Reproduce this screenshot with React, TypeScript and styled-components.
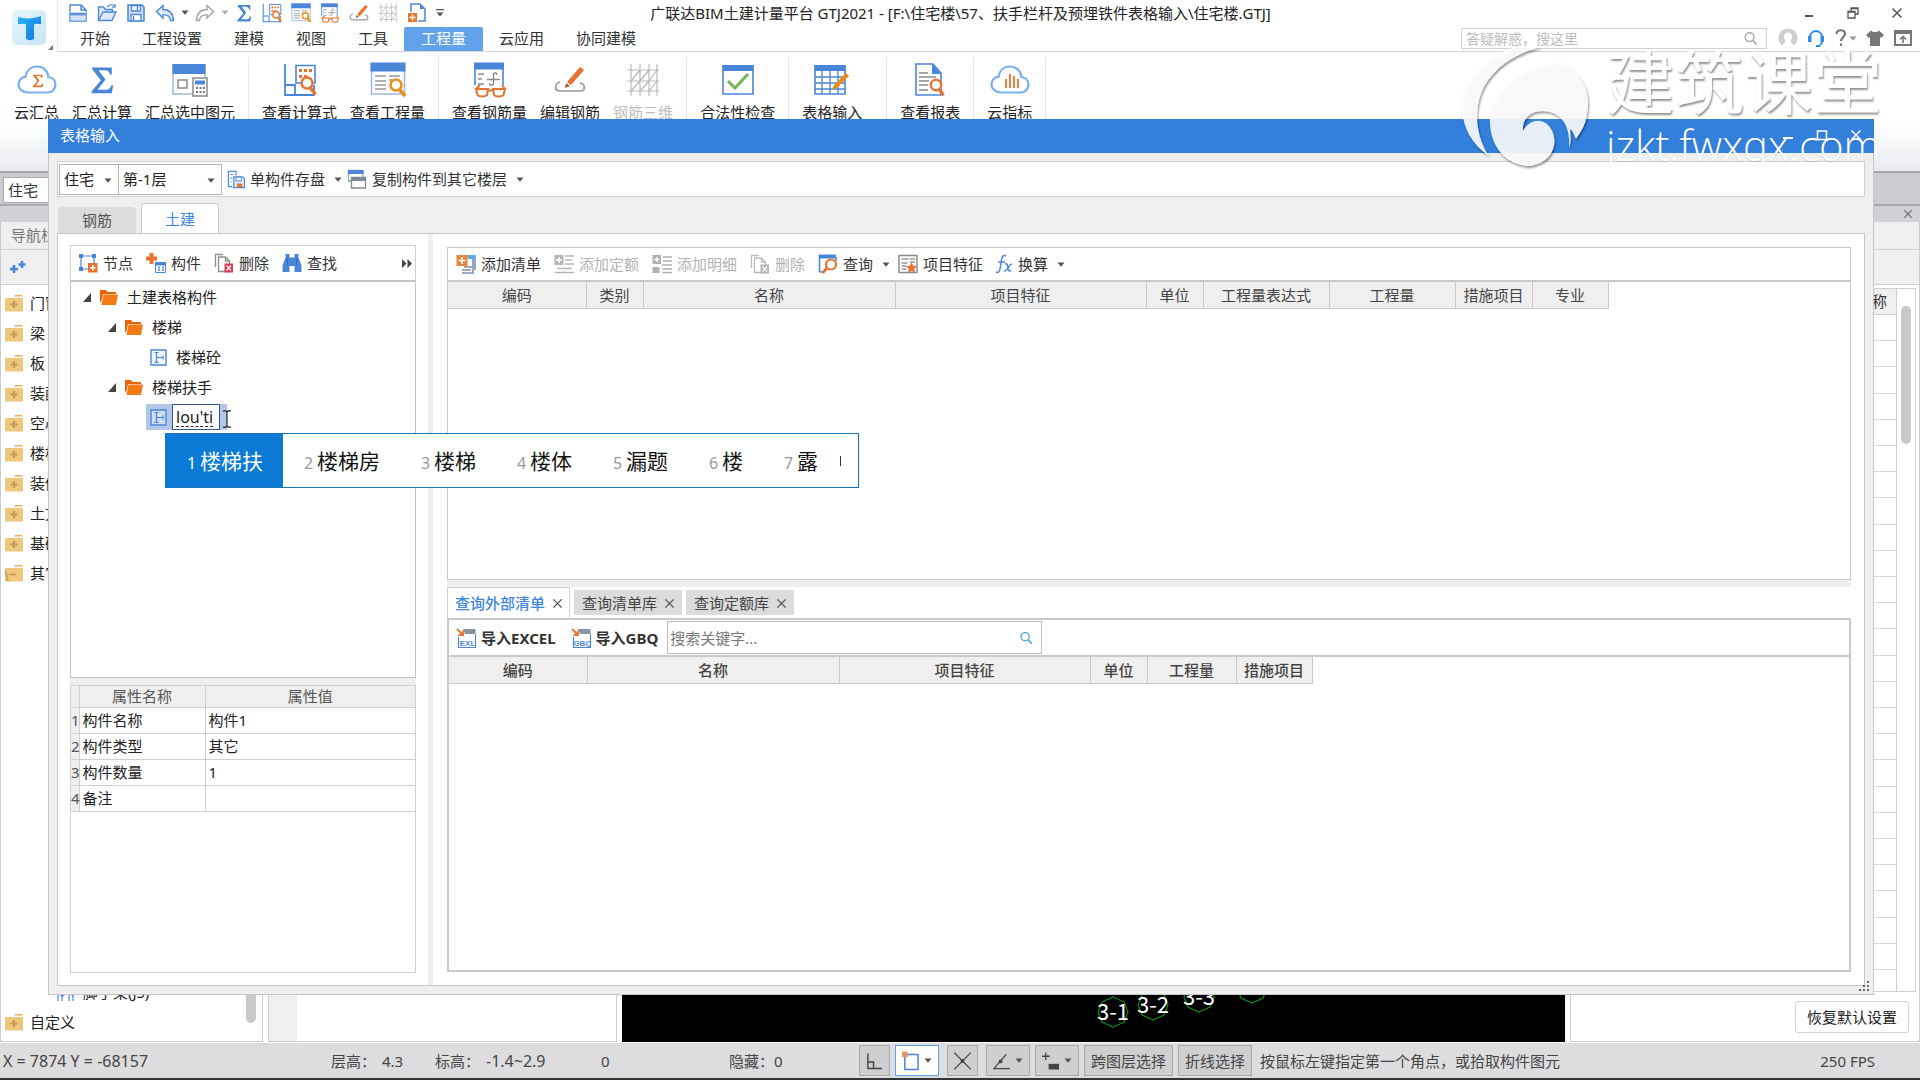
import React from "react";
import styled, { createGlobalStyle, css } from "styled-components";

const UI_FONT = `"Noto Sans", "Noto Sans CJK SC", sans-serif`;
const BLUE = "#4a86d8";
const ORANGE = "#e67430";
const GREY = "#a2a2a2";

const GlobalStyle = createGlobalStyle`
  *, *::before, *::after { box-sizing: border-box; }
  html, body { margin: 0; padding: 0; height: 100%; overflow: hidden; background: #fff; }
  body { font: 15px/20px ${UI_FONT}; color: #333; }
  button, input, select { font: inherit; color: inherit; margin: 0; }
  button { background: none; border: 0; padding: 0; }
  table { border-collapse: collapse; table-layout: fixed; }
  svg { display: block; flex: none; }
`;

/* ---------- icons ---------- */

type IconProps = { size?: number; w?: number; h?: number; box?: string; children?: React.ReactNode };
const Icon = ({ size = 20, w, h, box = "0 0 20 20", children }: IconProps) => (
  <svg width={w ?? size} height={h ?? size} viewBox={box} fill="none" aria-hidden="true">
    {children}
  </svg>
);

const Caret = ({ color = "#555" }: { color?: string }) => (
  <svg width="8" height="5" viewBox="0 0 8 5" aria-hidden="true">
    <path d="M0.5 0.5h7L4 4.8z" fill={color} />
  </svg>
);

const SIGMA = "M3 1h14v5h-1.4C15.2 4 14.300 3 12 3H7.500l5 6.600L6.800 17H13c2 0 3-1.200 3.600-3.200H18L17 19.500H2.500v-1.300l6.700-8L3 2.300z";
const CLOUD = "M11 27.500C5.500 27.500 1.500 24 1.500 19.500c0-4 3-7.300 7-7.800C9.500 5.500 14 1.500 20 1.500c6.500 0 11 4.500 11.300 10.500 4.200.5 7.200 3.700 7.200 7.800 0 4.500-3.500 7.700-8 7.700z";

const QNew = () => (
  <Icon>
    <path d="M2 9V2h11l5 5v2M13 2v5h5M2 12v6h16v-6z" stroke={BLUE} strokeWidth="1.400" />
    <path d="M1 10.500h18" stroke={BLUE} strokeWidth="1.500" />
    <path d="M2.500 12.500h15v5h-15z" fill="#cfe0f7" />
  </Icon>
);
const QOpen = () => (
  <Icon>
    <path d="M1.500 17.500V4h5l2 2.500h7V9M1.500 17.500L6 9h13l-4 8.500z" stroke={BLUE} strokeWidth="1.300" fill="#dce9fa" />
    <path d="M10 4c3-3 6-3 8 0l-3 .2M18 4l.2-3" stroke={BLUE} strokeWidth="1.100" fill="none" />
  </Icon>
);
const QSave = () => (
  <Icon>
    <path d="M2 2h14l2 2v14H2z" stroke={BLUE} strokeWidth="1.500" fill="#cfe0f7" />
    <path d="M5.500 2.500h9v5.500h-9zM5 11.500h10V18H5z" stroke={BLUE} fill="#fff" strokeWidth="1.300" />
    <path d="M11.500 3v4M7.500 13v4" stroke={BLUE} strokeWidth="1.500" />
  </Icon>
);
const QUndo = ({ color = BLUE, flip = false }: { color?: string; flip?: boolean }) => (
  <Icon>
    <path
      transform={flip ? "translate(20 0) scale(-1 1)" : undefined}
      d="M1.500 8.500L8 2.500v4c6 0 10 3 10.500 11h-3c-.5-4-3-6-7.500-5.500V15z"
      stroke={color}
      strokeWidth="1.400"
      fill={flip ? "#fff" : "#dce9fa"}
    />
  </Icon>
);
const SigmaIcon = ({ size = 20 }: { size?: number }) => (
  <Icon size={size}>
    <path d={SIGMA} fill={BLUE} />
  </Icon>
);
const FormulaIcon = ({ size = 34 }: { size?: number }) => (
  <Icon size={size} box="0 0 34 34">
    <path d="M2 1v31h29V22M2 22h10v10" stroke={BLUE} strokeWidth="1.800" />
    <path d="M13 2.500h19V20H13z" stroke={BLUE} strokeWidth="1.600" fill="#fff" />
    <path d="M16 6h3v3h-3zM21 6h3v3h-3zM26 6h3v3h-3zM16 12h3v3h-3zM21 12h3v3h-3z" fill={ORANGE} />
    <circle cx="24" cy="20" r="5.500" stroke={ORANGE} strokeWidth="2.400" fill="#fff" />
    <path d="M27.500 25l5 6.500" stroke={ORANGE} strokeWidth="3.400" />
  </Icon>
);
const ReportIcon = ({ size = 36 }: { size?: number }) => (
  <Icon size={size} box="0 0 36 36">
    <path d="M1.500 3h33v29h-33z" stroke="#9db9dc" strokeWidth="1.600" fill="#fff" />
    <path d="M.5.500h35v9H.5z" fill={BLUE} />
    <path d="M5 14h11M19 14h11M5 19h11M5 23h11M5 27h11M19 18h3" stroke="#999" strokeWidth="1.600" />
    <circle cx="26" cy="23" r="5.500" stroke="#e58e1e" strokeWidth="2.600" fill="#fff" />
    <path d="M30 28l5 6" stroke="#e58e1e" strokeWidth="3.600" />
  </Icon>
);
const RebarIcon = ({ size = 36 }: { size?: number }) => (
  <Icon size={size} box="0 0 36 36">
    <path d="M3 6v17M31 6v17" stroke={BLUE} strokeWidth="1.600" />
    <path d="M2 .5h30v7H2z" fill={BLUE} />
    <path d="M6 12h6M6 17h4M6 22h6M15 17.500h13M21.500 11v10c0 3-4 3-4 0M21.500 12c1-2 4-1 3 1" stroke="#8a8a8a" strokeWidth="1.400" />
    <path d="M4 27h12l-1 6c-1.500 2-8 2-9.500 0zM21 27h12l-1.500 6c-1.500 2-8 2-9.500 0zM16 28.500h5M4 27l4-4M33 27l-3-4" stroke={ORANGE} strokeWidth="2" />
  </Icon>
);
const PencilIcon = ({ size = 32 }: { size?: number }) => (
  <Icon size={size} box="0 0 32 32">
    <path d="M6 18c-5 1-6 8-1 9h22c5-1 4-7-1-8" stroke="#9a9a9a" strokeWidth="1.700" />
    <path d="M26 3l4 3-13 15-4-3z" fill={ORANGE} />
    <path d="M12 19l4 3-5 2z" fill="#9c5a35" />
  </Icon>
);
const MeshIcon = ({ size = 34 }: { size?: number }) => (
  <Icon size={size} box="0 0 34 34">
    <path d="M5 1v32M14 1v32M23 1v32M31 1v32M1 7h32M1 18h32M1 28h32M5 18L14 7M14 18l9-11M23 18l8-11M5 28l9-10M14 28l9-10M23 28l8-10" stroke="#b9b9b9" strokeWidth="1.200" />
  </Icon>
);
const CheckIcon = () => (
  <Icon w={32} h={32} box="0 0 32 32">
    <path d="M1 2h30v28H1z" stroke={BLUE} strokeWidth="1.600" fill="#fff" />
    <path d="M.5 1h31v6H.5z" fill={BLUE} />
    <path d="M6 17l7 7 13-14" stroke="#76b35a" strokeWidth="3" />
  </Icon>
);
const TableIcon = () => (
  <Icon w={36} h={32} box="0 0 36 32">
    <path d="M1 2h30v28H1z" stroke={BLUE} strokeWidth="1.600" fill="#fff" />
    <path d="M.5 1h31v6H.5z" fill={BLUE} />
    <path d="M1 13h30M1 19h30M1 25h30M8 7v23M16 7v23M24 7v23" stroke={BLUE} strokeWidth="1.300" />
    <path d="M32 9l3 3-12 12-5 2 2-5z" fill="#e58e1e" />
  </Icon>
);
const SheetIcon = () => (
  <Icon w={30} h={34} box="0 0 30 34">
    <path d="M1 1h17l8 9v22H1z" stroke={BLUE} strokeWidth="1.600" fill="#fff" />
    <path d="M17 1v10h9z" fill={BLUE} />
    <path d="M4 10h9M4 14h17M4 18h10M4 22h9M4 27h9" stroke="#8a8a8a" strokeWidth="1.500" />
    <circle cx="21" cy="22" r="5.200" stroke={ORANGE} strokeWidth="2.400" fill="#fff" />
    <path d="M24.500 26.500l4 6" stroke={ORANGE} strokeWidth="3.200" />
  </Icon>
);
const CloudSumIcon = () => (
  <Icon w={40} h={30} box="0 0 40 30">
    <path d={CLOUD} stroke="#78b0ef" strokeWidth="2.200" />
    <path transform="translate(14 9) scale(.68)" d={SIGMA} fill={ORANGE} />
  </Icon>
);
const CloudBarsIcon = () => (
  <Icon w={40} h={30} box="0 0 40 30">
    <path d={CLOUD} stroke="#78b0ef" strokeWidth="2.200" />
    <path d="M16 14v9M20 9v14M24 11v12M28 14v9" stroke={ORANGE} strokeWidth="1.800" />
  </Icon>
);
const CalcIcon = () => (
  <Icon w={36} h={34} box="0 0 36 34">
    <path d="M1 2h32v29H1z" stroke="#9db9dc" strokeWidth="1.500" fill="#fff" />
    <path d="M.5 1h33v10H.5z" fill={BLUE} />
    <path d="M6 17h9v8H6z" stroke="#8a8a8a" strokeWidth="1.500" />
    <path d="M21 15h14v18H21z" fill="#fff" stroke="#8a8a8a" strokeWidth="1.500" />
    <path d="M23 17.500h10v4H23z" fill={BLUE} />
    <path d="M24 25h2M27.500 25h2M31 25h2M24 29h2M27.500 29h2M31 29h2" stroke="#777" strokeWidth="2" />
  </Icon>
);
const QExport = () => (
  <Icon>
    <path d="M4 9V1h9l5 5v12h-7" stroke={BLUE} strokeWidth="1.500" />
    <path d="M13 1v5h5z" fill={BLUE} />
    <path d="M1 10h9v9H1z" fill={ORANGE} />
    <path d="M5.500 11.500v6M2.500 14.500h6" stroke="#fff" strokeWidth="1.400" />
  </Icon>
);
const FolderOpen = () => (
  <Icon w={18} h={16} box="0 0 18 16">
    <path d="M0 1h6l1.500 2H16v2H3L1.500 12 0 14z" fill="#e8650a" />
    <path d="M3.500 5.500H18L16 16H1.500z" fill="#f47b14" />
  </Icon>
);
const NavFolder = ({ open = false }: { open?: boolean }) => (
  <Icon w={18} h={17} box="0 0 18 17">
    <path d="M9 1.500l1-1.500h7l.8 1.500z" fill="#e3b35c" />
    <path d="M0 3h18v13.500H0z" fill="#eec77c" />
    {open ? <path d="M4 9.500h7M0 5l3 11" stroke="#c39a50" strokeWidth="1.500" /> : <path d="M9 6v7M5.500 9.500h7" stroke="#c39a50" strokeWidth="2.200" />}
  </Icon>
);
const LeafIcon = () => (
  <Icon w={17} h={17} box="0 0 17 17">
    <path d="M1 1h15v15H1z" stroke={BLUE} strokeWidth="1.400" fill="#eaf2fc" fillOpacity=".5" />
    <path d="M4.500 3.500h4M4.500 13.500h4M6.500 3.500v10M6.500 8.500H13M13 6.500v4" stroke={BLUE} strokeWidth="1.200" />
  </Icon>
);
const NodeIcon = () => (
  <Icon>
    <path d="M3 3h13v13H3z" stroke={BLUE} strokeWidth="1.200" />
    <path d="M1 1h4v4H1zM14 1h4v4h-4zM1 14h4v4H1z" fill={BLUE} />
    <path d="M10 10h9.500v9.500H10z" fill={ORANGE} />
    <path d="M14.800 12v5.500M12 14.800h5.500" stroke="#fff" strokeWidth="1.400" />
  </Icon>
);
const PartIcon = () => (
  <Icon>
    <path d="M3.500 0h4v3.500H11v4H7.500V11h-4V7.500H0v-4h3.500z" fill={ORANGE} />
    <path d="M9.500 9.500h10v10h-10z" stroke={BLUE} fill="#fff" />
    <path d="M9 9h11v3.500H9z" fill={BLUE} />
    <path d="M12 14.500h2M16 14.500h2M12 17h2M16 17h2" stroke={BLUE} strokeWidth="1.400" />
  </Icon>
);
const DeleteIcon = ({ off = false }: { off?: boolean }) => (
  <Icon>
    <path d="M1.500 14V1.500H9M4.500 4h7l4 4v10.500h-11zM11.500 4v4h4" stroke={off ? "#bbb" : "#8a8f88"} strokeWidth="1.300" />
    <path d="M10.500 10.500h8.500v9h-8.500z" fill={off ? "#b5b5b5" : "#d83b55"} />
    <path d="M12.500 12.500l4.500 5M17 12.500l-4.500 5" stroke="#fff" strokeWidth="1.200" />
  </Icon>
);
const BinocularsIcon = () => (
  <Icon>
    <path d="M3.500 1h4v3.500h5V1h4v3.500l3 8V19h-7v-6h-5v6h-7v-6.500l3-8z" fill={BLUE} />
    <path d="M5.500 5v7M14.500 5v7" stroke="#2f6bbd" />
  </Icon>
);
const AddListIcon = () => (
  <Icon>
    <path d="M8 2h11v14M6 19h11V5" stroke="#7c93b0" strokeWidth="1.600" />
    <path d="M12 1h7v4h-7z" fill="#5da3e8" />
    <path d="M8 13h8M6 16h9" stroke="#889" strokeWidth="1.300" />
    <path d="M.5 1h11v11H.5z" fill="#e6853f" />
    <path d="M6 3v7M2.500 6.500h7" stroke="#fff" strokeWidth="1.600" />
  </Icon>
);
const AddQuotaIcon = () => (
  <Icon>
    <path d="M.5 1h9v10h-9z" fill="#b5b5b5" />
    <path d="M5 3v6M2 6h6" stroke="#fff" strokeWidth="1.500" />
    <path d="M11 2h9M11 6h7M11 10h9M3 14.500h15M1 18.500h19" stroke="#b5b5b5" strokeWidth="1.600" />
  </Icon>
);
const AddDetailIcon = () => (
  <Icon>
    <path d="M.5 1h8.500v9H.5zM.5 13h7v6h-7z" fill="#b0b0b0" />
    <path d="M4.800 3v5M2.300 5.500h5" stroke="#fff" strokeWidth="1.300" />
    <path d="M11 3h9M11 7h9M10 11h10M10 15h10M10 18.500h10" stroke="#b0b0b0" strokeWidth="1.700" />
  </Icon>
);
const QueryIcon = () => (
  <Icon>
    <path d="M1.500 18V3M1.500 18h4M18 3v4" stroke={BLUE} strokeWidth="1.500" />
    <path d="M.8.500h17v4H.8z" fill={BLUE} />
    <circle cx="13" cy="10.500" r="5" stroke={ORANGE} strokeWidth="2.200" fill="#fff" />
    <path d="M9 14l-4.500 5" stroke={ORANGE} strokeWidth="2.800" />
  </Icon>
);
const FeatureIcon = () => (
  <Icon>
    <path d="M1 1.500h18v17H1z" stroke="#8a8a8a" strokeWidth="1.500" />
    <path d="M3.500 5h7M12 5h5M3.500 9h6M3.500 12h5M3.500 15h5M12 8h5" stroke="#999" strokeWidth="1.300" />
    <path d="M13.500 8.500l1.700 3.200 3.800.5-2.700 2.600.7 3.900-3.500-1.800-3.500 1.800.7-3.900L8 12.200l3.800-.5z" fill={ORANGE} />
  </Icon>
);
const SaveDiskIcon = () => (
  <Icon w={18}>
    <path d="M1.500 18.500V1.500H10V6M1.500 18.500H6M4 5h3M4 9h2M4 13h1" stroke={BLUE} strokeWidth="1.300" />
    <path d="M7.500 7.500h10l2 2v10h-12z" fill="#dce9fa" stroke={BLUE} strokeWidth="1.300" />
    <path d="M10 8h6v4h-6z" fill="#fff" stroke={BLUE} />
    <path d="M11 15h6v4h-6z" fill={ORANGE} />
  </Icon>
);
const CopyFloorIcon = () => (
  <Icon>
    <path d="M1.500 1.500H16V12H1.500z" fill="#fff" stroke="#8aa" strokeWidth="1.300" />
    <path d="M1 1h15.500v4H1z" fill={BLUE} />
    <path d="M4.500 8.500h14V19h-14z" fill="#fff" stroke="#888" strokeWidth="1.300" />
    <path d="M4 8h15v4H4z" fill="#7d8a99" />
  </Icon>
);
const ImportIcon = ({ label }: { label: string }) => (
  <Icon w={20} h={20}>
    <path d="M7 1h12.500v5H9z" fill="#8794a3" />
    <path d="M2.500 9v10.500h17V6" stroke={BLUE} strokeWidth="1.100" />
    <path d="M1 1l6 6M7 2.500V7H2.500" stroke={ORANGE} strokeWidth="1.800" />
    <text x="11.500" y="17.500" fontSize="8" fontWeight="700" textAnchor="middle" fill={BLUE} fontFamily="Liberation Sans, sans-serif">{label}</text>
  </Icon>
);
const MagnifierIcon = ({ color, size = 16 }: { color: string; size?: number }) => (
  <Icon size={size} box="0 0 16 16">
    <circle cx="7" cy="6.500" r="4.700" stroke={color} strokeWidth="1.500" />
    <path d="M10.500 10l4 4.500" stroke={color} strokeWidth="1.900" />
  </Icon>
);
const CrossIcon = ({ color = "#555", size = 12 }: { color?: string; size?: number }) => (
  <Icon size={size} box="0 0 12 12">
    <path d="M1.500 1.500l9 9M10.500 1.500l-9 9" stroke={color} strokeWidth="1.500" />
  </Icon>
);

/* ---------- shell ---------- */

const Shell = styled.div`
  position: relative;
  display: flex;
  flex-direction: column;
  height: 100vh;
  overflow: hidden;
  background: #fff;
`;
const Header = styled.header`
  display: flex;
  height: 52px;
  flex: none;
`;
const AppLogo = styled.button`
  width: 57px;
  padding: 8px 0 0 12px;
  flex: none;
`;
const HeaderMain = styled.div`
  flex: 1;
  display: flex;
  flex-direction: column;
  border-bottom: 1px solid #d3d6da;
  border-left: 1px solid #e6e8ea;
`;
const TitleRow = styled.div`
  display: grid;
  grid-template-columns: 1fr auto 1fr;
  align-items: center;
  height: 25px;
  padding-right: 17px;
`;
const QuickBar = styled.div`
  display: flex;
  align-items: center;
  gap: 9px;
  padding-left: 10px;
`;
const QuickButton = styled.button<{ $menu?: boolean }>`
  display: flex;
  align-items: center;
  gap: 6px;
  margin-right: ${(p) => (p.$menu ? "-3px" : "0")};
`;
const WindowTitle = styled.h1`
  margin: 0;
  font-size: 15px;
  font-weight: 400;
  color: #222;
  padding-right: 40px;
`;
const WindowButtons = styled.div`
  display: flex;
  justify-content: flex-end;
  align-items: center;
  gap: 32px;
`;
const MenuRow = styled.nav`
  display: flex;
  align-items: flex-end;
  height: 26px;
  padding-left: 6px;
`;
const MenuTab = styled.button<{ $active?: boolean }>`
  height: 24px;
  padding: 0 16px 2px;
  ${(p) => p.$active && css`
    padding: 0 17px 2px;
    background: #62a3ec;
    color: #fff;
    border-radius: 2px 2px 0 0;
  `}
`;
const HelpBox = styled.label`
  display: flex;
  align-items: center;
  width: 306px;
  height: 21px;
  margin: 0 0 2px auto;
  padding: 0 8px 0 4px;
  border: 1px solid #d2d2d2;
  input {
    flex: 1;
    min-width: 0;
    border: 0;
    outline: 0;
    padding: 0;
    height: 18px;
    font-size: 14px;
    background: none;
  }
  input::placeholder { color: #bcbcbc; }
`;
const HelpIcons = styled.div`
  display: flex;
  align-items: center;
  gap: 8px;
  padding: 0 7px 3px 11px;
  button { display: flex; align-items: center; gap: 1px; }
`;

const Ribbon = styled.div`
  display: flex;
  height: 121px;
  flex: none;
  padding-left: 1px;
  background: linear-gradient(#fff 60%, #e9ebef);
  border-bottom: 2px solid #a5a7ab;
`;
const RibbonGroup = styled.div<{ $wide?: boolean }>`
  display: flex;
  gap: 1px;
  height: 82px;
  margin-top: 5px;
  padding: 0 ${(p) => (p.$wide ? 18 : 7)}px 0 7px;
  border-right: 1px solid #e3e5e8;
`;
const RibbonButton = styled.button`
  display: flex;
  flex-direction: column;
  align-items: center;
  padding: 0 6px;
  color: #222;
  &:disabled { color: #bdbdbd; }
`;
const RibbonIcon = styled.span`
  display: flex;
  align-items: center;
  height: 45px;
`;

const FloorBar = styled.div`
  height: 33px;
  flex: none;
  padding: 4px 3px;
  background: #cbcbd2;
  border-bottom: 2px solid #a9a9ae;
`;
const FloorSelect = styled.select`
  appearance: none;
  width: 70px;
  height: 26px;
  padding: 0 4px;
  border: 1px solid #aaa;
  background: #fff;
`;
const DockCaption = styled.div`
  display: flex;
  justify-content: flex-end;
  align-items: center;
  height: 16px;
  flex: none;
  padding-right: 7px;
  background: #d0d1d5;
`;
const Workspace = styled.div`
  flex: 1;
  min-height: 0;
  display: grid;
  grid-template-columns: 263px 349px minmax(0, 1fr) 350px;
  column-gap: 5px;
  background: #fff;
  padding-bottom: 1px;
`;
const Dock = styled.section`
  display: flex;
  flex-direction: column;
  min-width: 0;
  min-height: 0;
  border: 1px solid #c9cbce;
  border-top: 0;
`;
const DockTitle = styled.div`
  height: 28px;
  flex: none;
  padding: 3px 10px;
  background: #efefef;
  color: #777;
  border-bottom: 1px solid #cfcfcf;
`;
const DockTools = styled.div`
  height: 35px;
  flex: none;
  padding: 9px 8px;
  background: #efefef;
  border-bottom: 1px solid #cfcfcf;
`;
const NavBody = styled.div`
  flex: 1;
  display: flex;
  min-height: 0;
`;
const NavList = styled.ul`
  flex: 1;
  display: flex;
  flex-direction: column;
  margin: 0;
  padding: 3px 0 4px 4px;
  list-style: none;
`;
const NavItem = styled.li<{ $child?: boolean; $push?: boolean }>`
  display: flex;
  align-items: center;
  gap: 7px;
  height: 30px;
  flex: none;
  padding-left: ${(p) => (p.$child ? 50 : 0)}px;
  margin-top: ${(p) => (p.$push ? "auto" : 0)};
  color: #222;
  white-space: nowrap;
`;
const NavScroll = styled.div`
  display: flex;
  align-items: flex-end;
  width: 16px;
  padding-bottom: 18px;
`;
const Thumb = styled.div<{ $h: number }>`
  width: 10px;
  height: ${(p) => p.$h}px;
  border-radius: 5px;
  background: #c9c9c9;
`;
const Gutter = styled.div`
  width: 28px;
  height: 100%;
  background: #efefef;
`;
const Canvas = styled.div`
  display: flex;
  align-items: flex-end;
  justify-content: center;
  padding-left: 188px;
  background: #000;
  overflow: hidden;
`;
const AttrGrid = styled.div`
  flex: 1;
  min-height: 0;
  display: flex;
  margin: 3px 3px 0 0;
  border: 1px solid #cfcfcf;
`;
const AttrColumn = styled.div`
  flex: 1;
  display: flex;
  flex-direction: column;
  border-right: 1px solid #cfcfcf;
`;
const AttrHead = styled.div`
  height: 26px;
  flex: none;
  padding: 2px 9px;
  text-align: right;
  background: #efefef;
  border-bottom: 1px solid #cfcfcf;
`;
const AttrRow = styled.div`
  flex: 1;
  border-bottom: 1px solid #d8d8d8;
`;
const AttrRest = styled.div`
  height: 21px;
  flex: none;
`;
const AttrScroll = styled.div`
  width: 18px;
  padding: 17px 4px;
`;
const ResetRow = styled.div`
  display: flex;
  justify-content: flex-end;
  padding: 9px 10px 8px;
`;
const ResetButton = styled.button`
  height: 32px;
  padding: 0 11px;
  border: 1px solid #d3d3d3;
  border-radius: 3px;
  background: #fff;
  color: #222;
`;

const StatusBar = styled.footer`
  display: flex;
  align-items: center;
  height: 37px;
  flex: none;
  padding-left: 3px;
  background: #dddddf;
  border-bottom: 2px solid #333436;
  color: #444;
  white-space: nowrap;
`;
const StatusCell = styled.span<{ $w: number; $num?: boolean }>`
  width: ${(p) => p.$w}px;
  flex: none;
  font-size: ${(p) => (p.$num ? 16 : 15)}px;
`;
const StatusButtons = styled.div`
  display: flex;
  gap: 5px;
  margin-right: 8px;
`;
const StatusButton = styled.button<{ $active?: boolean; $gap?: boolean }>`
  display: flex;
  align-items: center;
  gap: 5px;
  height: 31px;
  padding: 0 6px;
  margin-right: ${(p) => (p.$gap ? 3 : 0)}px;
  border: 1px solid ${(p) => (p.$active ? "#5aa2ea" : "#a9a9ac")};
  background: ${(p) => (p.$active ? "#fff" : "#cfcfd2")};
`;
const Fps = styled.span`
  margin: 0 45px 0 auto;
`;

/* ---------- dialog ---------- */

const Dialog = styled.section`
  position: absolute;
  top: 119px;
  left: 48px;
  right: 46px;
  bottom: 85px;
  display: flex;
  flex-direction: column;
  background: #efefef;
`;
const DialogTitle = styled.div`
  display: flex;
  align-items: center;
  justify-content: space-between;
  height: 34px;
  flex: none;
  padding: 0 12px 2px;
  background: #337fdc;
  color: #fff;
`;
const DialogButtons = styled.div`
  display: flex;
  align-items: center;
  gap: 22px;
`;
const DialogBody = styled.div`
  flex: 1;
  min-height: 0;
  display: flex;
  flex-direction: column;
  padding: 8px;
  border: 1px solid #c6c6c6;
  border-top: 0;
`;
const DialogTools = styled.div`
  display: flex;
  align-items: center;
  height: 36px;
  flex: none;
  padding-left: 1px;
  border: 1px solid #cfcfcf;
  background: #fff;
`;
const SelectWrap = styled.span<{ $w: number }>`
  position: relative;
  display: block;
  width: ${(p) => p.$w}px;
  margin-right: -1px;
  select {
    appearance: none;
    width: 100%;
    height: 31px;
    padding: 0 4px;
    border: 1px solid #b5b5b5;
    border-radius: 0;
    background: #fff;
    color: #222;
  }
  svg { position: absolute; right: 7px; top: 14px; pointer-events: none; }
`;
const ToolGroup = styled.div`
  display: flex;
  padding-left: 6px;
`;
const ToolButton = styled.button<{ $gap?: number; $bold?: boolean }>`
  display: flex;
  align-items: center;
  gap: 5px;
  flex: none;
  margin-right: ${(p) => p.$gap ?? 13}px;
  font-weight: ${(p) => (p.$bold ? 700 : 400)};
  white-space: nowrap;
  &:disabled { color: #b3b3b3; }
`;
const CaretSlot = styled.span`
  display: block;
  padding-left: 4px;
`;
const Tabs = styled.div`
  display: flex;
  align-items: flex-end;
  gap: 5px;
  height: 37px;
  flex: none;
  padding-left: 1px;
  margin-bottom: -1px;
`;
const Tab = styled.button<{ $active?: boolean }>`
  width: 78px;
  height: ${(p) => (p.$active ? 31 : 27)}px;
  padding-bottom: ${(p) => (p.$active ? 0 : 2)}px;
  border: 1px solid ${(p) => (p.$active ? "#c6c6c6" : "#dcdcdc")};
  border-bottom: ${(p) => (p.$active ? "1px solid #fff" : "1px solid #c6c6c6")};
  border-radius: 4px 4px 0 0;
  background: ${(p) => (p.$active ? "#fff" : "#dcdcdc")};
  color: ${(p) => (p.$active ? "#3d86de" : "#555")};
`;
const Panes = styled.div`
  flex: 1;
  min-height: 0;
  display: grid;
  grid-template-columns: 370px 5px minmax(0, 1fr);
  border: 1px solid #c6c6c6;
  background: #fff;
`;
const Divider = styled.div`
  background: #efefef;
`;
const LeftPane = styled.div`
  display: flex;
  flex-direction: column;
  min-height: 0;
  padding: 11px 12px 12px 12px;
`;
const Tools = styled.div`
  display: flex;
  align-items: center;
  height: 35px;
  flex: none;
  padding-left: 7px;
  border: 1px solid #cfcfcf;
  border-bottom: 0;
`;
const MoreButton = styled.button`
  margin: 0 3px 0 auto;
`;
const Tree = styled.ul`
  flex: 1;
  min-height: 0;
  margin: 0;
  padding: 0;
  list-style: none;
  border: 1px solid #c4c4c4;
  border-top-width: 2px;
`;
const TreeRow = styled.li<{ $level: number }>`
  display: flex;
  align-items: center;
  height: 30px;
  gap: 9px;
  padding-left: ${(p) => 12 + p.$level * 25}px;
  color: #222;
  line-height: 20px;
`;
const TreeIndent = styled.span`
  width: 8px;
`;
const Selected = styled.span`
  display: flex;
  align-items: center;
  width: 81px;
  height: 26px;
  margin-left: -4px;
  padding-left: 4px;
  gap: 5px;
  background: #b4c7e7;
`;
const NameInput = styled.input`
  width: 48px;
  height: 26px;
  padding: 0 3px;
  border: 1px solid #33569c;
  outline: 0;
  background: #fff;
  color: #222;
  font-size: 16px;
  text-decoration: underline dashed 1px;
  text-underline-offset: 3px;
`;
const Strip = styled.div`
  height: 7px;
  flex: none;
  background: #efefef;
`;
const PropBox = styled.div`
  height: 288px;
  flex: none;
  border: 1px solid #cfcfcf;
`;
const PropTable = styled.table`
  width: 100%;
  color: #222;
  th, td {
    height: 26px;
    padding: 0 3px;
    border: 1px solid #cfcfcf;
    font-weight: 400;
    text-align: left;
    white-space: nowrap;
  }
  thead th { height: 21px; line-height: 19px; text-align: center; background: #efefef; color: #555; }
  tr > :first-child { width: 8px; padding: 0; border-left: 0; background: #efefef; color: #555; }
  tr > :nth-child(2) { width: 126px; }
  tr > :last-child { border-right: 0; }
  thead th { border-top: 0; }
`;
const RightPane = styled.div`
  display: flex;
  flex-direction: column;
  min-width: 0;
  min-height: 0;
  padding: 13px 13px 13px 14px;
`;
const UpperBox = styled.div`
  height: 333px;
  flex: none;
  border: 1px solid #c9c9c9;
  overflow: hidden;
`;
const UpperTools = styled.div`
  display: flex;
  align-items: center;
  height: 34px;
  padding-left: 8px;
  border-bottom: 2px solid #c9c9c9;
`;
const DataTable = styled.table<{ $w: number; $bold?: boolean }>`
  width: ${(p) => p.$w}px;
  th {
    height: 26px;
    padding: 0;
    border: 1px solid #c9c9c9;
    border-top: 0;
    border-left: 0;
    background: #efefef;
    font-weight: ${(p) => (p.$bold ? 500 : 400)};
    color: #444;
  }
`;
const LowerTabs = styled.div`
  display: flex;
  align-items: center;
  gap: 4px;
  height: 31px;
  flex: none;
`;
const LowerTab = styled.button<{ $active?: boolean }>`
  display: flex;
  align-items: center;
  gap: 7px;
  height: ${(p) => (p.$active ? 31 : 25)}px;
  padding: 0 6px 0 7px;
  border: 1px solid ${(p) => (p.$active ? "#d0d0d0" : "#dcdcdc")};
  border-bottom: 0;
  background: ${(p) => (p.$active ? "#fff" : "#dcdcdc")};
  color: ${(p) => (p.$active ? "#3d86de" : "#444")};
  font-weight: ${(p) => (p.$active ? 500 : 400)};
`;
const LowerBox = styled.div`
  flex: 1;
  min-height: 0;
  border: 2px solid #c9c9c9;
`;
const LowerTools = styled.div`
  display: flex;
  align-items: center;
  height: 37px;
  padding-left: 7px;
  border-bottom: 2px solid #c9c9c9;
`;
const KeywordBox = styled.label`
  display: flex;
  align-items: center;
  width: 375px;
  height: 33px;
  padding: 0 8px 0 2px;
  border: 1px solid #bbb;
  input { flex: 1; min-width: 0; padding: 0; border: 0; outline: 0; background: none; }
  input::placeholder { color: #777; }
`;
const Grip = styled.div`
  position: absolute;
  right: 4px;
  bottom: 3px;
`;

/* ---------- overlays ---------- */

const Ime = styled.div`
  position: absolute;
  top: 433px;
  left: 165px;
  width: 694px;
  height: 55px;
  display: flex;
  border: 1px solid #1874bd;
  background: #fff;
  overflow: hidden;
`;
const Candidate = styled.button<{ $active?: boolean }>`
  display: flex;
  align-items: baseline;
  gap: 4px;
  flex: none;
  padding: 12px 20px 0 21px;
  line-height: 30px;
  font-size: 21px;
  background: ${(p) => (p.$active ? "#0b7bd6" : "#fff")};
  color: ${(p) => (p.$active ? "#fff" : "#111")};
  small { font-size: 16px; width: 9px; color: ${(p) => (p.$active ? "#fff" : "#999")}; }
`;
const ImeStub = styled.i`
  width: 1px;
  height: 10px;
  margin: 22px 0 0 2px;
  background: #333;
`;
const Pointer = styled.div`
  position: absolute;
  left: 222px;
  top: 410px;
`;
const Watermark = styled.div`
  position: absolute;
  top: 41px;
  right: 38px;
  display: flex;
  gap: 15px;
  color: #fff;
  pointer-events: none;
`;
const WatermarkText = styled.div`
  height: 122px;
  overflow: hidden;
  font-weight: 400;
  white-space: nowrap;
  text-shadow: 1px 2px 2px rgba(0, 0, 0, 0.42);
`;
const MarkName = styled.div`
  font-size: 69px;
  line-height: 82px;
`;
const MarkUrl = styled.div`
  font: 300 42px/44px "Open Sans", "Noto Sans", sans-serif;
  text-shadow: 0 1px 1px rgba(0, 0, 0, 0.12);
`;

/* ---------- data ---------- */

const MENUS = ["开始", "工程设置", "建模", "视图", "工具", "工程量", "云应用", "协同建模"];
const RIBBON: { wide?: boolean; items: { label: string; icon: React.ReactNode; off?: boolean }[] }[] = [
  { items: [
    { label: "云汇总", icon: <CloudSumIcon /> },
    { label: "汇总计算", icon: <SigmaIcon size={28} /> },
    { label: "汇总选中图元", icon: <CalcIcon /> },
  ] },
  { items: [
    { label: "查看计算式", icon: <FormulaIcon /> },
    { label: "查看工程量", icon: <ReportIcon /> },
  ] },
  { items: [
    { label: "查看钢筋量", icon: <RebarIcon /> },
    { label: "编辑钢筋", icon: <PencilIcon /> },
    { label: "钢筋三维", icon: <MeshIcon />, off: true },
  ] },
  { items: [{ label: "合法性检查", icon: <CheckIcon /> }] },
  { wide: true, items: [{ label: "表格输入", icon: <TableIcon /> }] },
  { items: [{ label: "查看报表", icon: <SheetIcon /> }] },
  { items: [{ label: "云指标", icon: <CloudBarsIcon /> }] },
];
const NAV = ["门窗洞", "梁", "板", "装配式", "空心楼盖", "楼梯", "装修", "土方", "基础", "其它"];
const UPPER_COLS: [string, number][] = [
  ["编码", 138], ["类别", 57], ["名称", 252], ["项目特征", 251], ["单位", 57],
  ["工程量表达式", 126], ["工程量", 126], ["措施项目", 77], ["专业", 76],
];
const LOWER_COLS: [string, number][] = [
  ["编码", 138], ["名称", 252], ["项目特征", 251], ["单位", 57], ["工程量", 89], ["措施项目", 76],
];
const PROPS = [["构件名称", "构件1"], ["构件类型", "其它"], ["构件数量", "1"], ["备注", ""]];
const CANDIDATES = ["楼梯扶", "楼梯房", "楼梯", "楼体", "漏题", "楼", "露"];

const Columns = ({ cols, bold }: { cols: [string, number][]; bold?: boolean }) => (
  <DataTable $w={cols.reduce((sum, c) => sum + c[1], 0)} $bold={bold}>
    <colgroup>{cols.map(([name, w]) => <col key={name} style={{ width: w }} />)}</colgroup>
    <thead><tr>{cols.map(([name]) => <th key={name} scope="col">{name}</th>)}</tr></thead>
  </DataTable>
);

const TreeArrow = () => (
  <svg width="8" height="9" viewBox="0 0 8 9" aria-hidden="true"><path d="M8 0v9H0z" fill="#444" /></svg>
);

const AxisMarks = () => (
  <svg width="190" height="60" viewBox="0 0 190 60" aria-hidden="true">
    {[[20, 30, "3-1"], [60, 23, "3-2"], [106, 15, "3-3"], [159, 6, ""]].map(([x, y, t]) => (
      <g key={String(x)}>
        <path
          transform={`translate(${x} ${y})`}
          d="M0-15l11 5 4 10-4 10-11 5-11-5-4-10 4-10z"
          fill="none"
          stroke="#0c8a1c"
          strokeWidth="1.200"
        />
        <text x={x} y={Number(y) + 8} fontSize="22" textAnchor="middle" fill="#fff" fontFamily="Noto Sans CJK SC, sans-serif">{t}</text>
      </g>
    ))}
  </svg>
);

export default function App() {
  return (
    <Shell>
      <GlobalStyle />
      <Header>
        <AppLogo aria-label="GTJ">
          <svg width="42" height="44" viewBox="0 0 42 44" aria-hidden="true">
            <defs>
              <linearGradient id="tile" x1="0" y1="0" x2="1" y2="1"><stop stopColor="#e8f5fc" /><stop offset="1" stopColor="#c6e4f6" /></linearGradient>
              <linearGradient id="tee" x1="0" y1="0" x2="1" y2="1"><stop stopColor="#27b4f5" /><stop offset="1" stopColor="#1673e0" /></linearGradient>
            </defs>
            <rect x="0" y="2" width="34" height="35" rx="5" fill="url(#tile)" />
            <path d="M6 9c7 2 15 2 23-1v8c-3 0-6-1-7 1v13c0 3-8 3-8 0V17c0-2-5-1-8-1z" fill="url(#tee)" />
            <path d="M41 37v5h-5z" fill="#777" />
          </svg>
        </AppLogo>
        <HeaderMain>
          <TitleRow>
            <QuickBar>
              <QuickButton aria-label="新建"><QNew /></QuickButton>
              <QuickButton aria-label="打开"><QOpen /></QuickButton>
              <QuickButton aria-label="保存"><QSave /></QuickButton>
              <QuickButton $menu aria-label="撤销"><QUndo /><Caret /></QuickButton>
              <QuickButton $menu aria-label="恢复"><QUndo color={GREY} flip /><Caret color="#aaa" /></QuickButton>
              <QuickButton aria-label="汇总"><SigmaIcon size={18} /></QuickButton>
              <QuickButton aria-label="计算式"><FormulaIcon size={20} /></QuickButton>
              <QuickButton aria-label="工程量"><ReportIcon size={20} /></QuickButton>
              <QuickButton aria-label="钢筋量"><RebarIcon size={20} /></QuickButton>
              <QuickButton aria-label="编辑钢筋"><PencilIcon size={20} /></QuickButton>
              <QuickButton aria-label="钢筋三维"><MeshIcon size={20} /></QuickButton>
              <QuickButton aria-label="导出"><QExport /></QuickButton>
              <QuickButton aria-label="更多">
                <svg width="8" height="9" viewBox="0 0 8 9"><path d="M0 1h8v1.200H0zM.5 4.500h7L4 8.500z" fill="#555" /></svg>
              </QuickButton>
            </QuickBar>
            <WindowTitle>广联达BIM土建计量平台 GTJ2021 - [F:\住宅楼\57、扶手栏杆及预埋铁件表格输入\住宅楼.GTJ]</WindowTitle>
            <WindowButtons>
              <button aria-label="最小化"><Icon size={12} box="0 0 12 12"><path d="M2 9h8" stroke="#555" strokeWidth="2" /></Icon></button>
              <button aria-label="还原"><Icon size={12} box="0 0 12 12"><path d="M1 4.500h7V11H1zM4 4V1h7v6H8M1 5h7M4 1.500h7" stroke="#555" strokeWidth="1.300" /></Icon></button>
              <button aria-label="关闭"><CrossIcon /></button>
            </WindowButtons>
          </TitleRow>
          <MenuRow>
            {MENUS.map((m) => <MenuTab key={m} $active={m === "工程量"}>{m}</MenuTab>)}
            <HelpBox>
              <input aria-label="搜索帮助" placeholder="答疑解惑，搜这里" />
              <MagnifierIcon color="#aaa" size={15} />
            </HelpBox>
            <HelpIcons>
              <button aria-label="用户"><Icon><circle cx="10" cy="10" r="9.500" fill="#cfcfcf" /><path d="M10 4.500c3 0 4.500 2.500 4 5-.4 2-1.500 3-1.500 4.500l3.500 3.500c-4 2.500-8 2.500-12 0L7.500 14C7.500 12.500 6.400 11.500 6 9.500c-.5-2.500 1-5 4-5z" fill="#fff" /></Icon></button>
              <button aria-label="客服"><Icon><path d="M4 12c-2-12 14-12 12 0M14 17c1.500-1 2-3 2-5M10 18h4" stroke="#2f8bea" strokeWidth="1.800" /><path d="M2 8h3.500v6H2zM14.500 8H18v6h-3.500z" fill="#2f8bea" /></Icon></button>
              <button aria-label="帮助"><Icon w={14} h={20} box="0 0 14 20"><path d="M2.500 6c0-5 8.500-5 8.500 0 0 3-4 3.500-4 7M7 15.500v2.500" stroke="#777" strokeWidth="2.200" /></Icon><Caret color="#999" /></button>
              <button aria-label="皮肤"><Icon><path d="M6 2.500l2 1.500h4l2-1.500L19 7l-3 3-1-1v9H5V9l-1 1-3-3z" fill="#777" /></Icon></button>
              <button aria-label="折叠功能区"><Icon><path d="M2 3h16v14H2zM2 5h16" stroke="#777" strokeWidth="2" /><path d="M10 15V9M7 11.500L10 8.500l3 3" stroke="#777" strokeWidth="1.600" /></Icon></button>
            </HelpIcons>
          </MenuRow>
        </HeaderMain>
      </Header>

      <Ribbon>
        {RIBBON.map((g, i) => (
          <RibbonGroup key={i} $wide={g.wide}>
            {g.items.map((it) => (
              <RibbonButton key={it.label} disabled={it.off}>
                <RibbonIcon>{it.icon}</RibbonIcon>
                {it.label}
              </RibbonButton>
            ))}
          </RibbonGroup>
        ))}
      </Ribbon>
      <FloorBar>
        <FloorSelect aria-label="单项工程"><option>住宅</option></FloorSelect>
      </FloorBar>
      <DockCaption><button aria-label="关闭面板"><CrossIcon color="#777" size={10} /></button></DockCaption>

      <Workspace>
        <Dock>
          <DockTitle>导航栏</DockTitle>
          <DockTools>
            <Icon w={18} h={16} box="0 0 18 16"><path d="M5 6v8M1 10h8M13 2v7M9.500 5.500h7" stroke={BLUE} strokeWidth="2.600" /></Icon>
          </DockTools>
          <NavBody>
            <NavList>
              {NAV.map((n) => <NavItem key={n}><NavFolder open={n === "其它"} />{n}</NavItem>)}
              <NavItem $child $push>
                <Icon w={21} h={17} box="0 0 21 17"><path d="M3 2v15M7 2v15M14 2v15M18 2v15M0 5h21M0 10h21M3 5l4 8 7-8 4 8" stroke={BLUE} strokeWidth="1.200" /></Icon>
                脚手架(JS)
              </NavItem>
              <NavItem><NavFolder />自定义</NavItem>
            </NavList>
            <NavScroll><Thumb $h={160} /></NavScroll>
          </NavBody>
        </Dock>
        <Dock><Gutter /></Dock>
        <Canvas><AxisMarks /></Canvas>
        <Dock>
          <DockTitle />
          <DockTools />
          <AttrGrid>
            <AttrColumn>
              <AttrHead>名称</AttrHead>
              {Array.from({ length: 25 }, (_, i) => <AttrRow key={i} />)}
              <AttrRest />
            </AttrColumn>
            <AttrScroll><Thumb $h={138} /></AttrScroll>
          </AttrGrid>
          <ResetRow><ResetButton>恢复默认设置</ResetButton></ResetRow>
        </Dock>
      </Workspace>

      <StatusBar>
        <StatusCell $w={328} $num>X = 7874 Y = -68157</StatusCell>
        <StatusCell $w={51}>层高：</StatusCell>
        <StatusCell $w={53}>4.3</StatusCell>
        <StatusCell $w={51}>标高：</StatusCell>
        <StatusCell $w={115} $num>-1.4~2.9</StatusCell>
        <StatusCell $w={128}>0</StatusCell>
        <StatusCell $w={130}>隐藏：0</StatusCell>
        <StatusButtons>
          <StatusButton aria-label="正交"><Icon w={17} h={20} box="0 0 18 20"><path d="M2 2v16h15M2 11h6v7" stroke="#444" strokeWidth="1.500" /></Icon></StatusButton>
          <StatusButton $active $gap aria-label="捕捉"><Icon w={17} h={20} box="0 0 18 20"><path d="M3 3h14v16H3z" stroke={BLUE} strokeWidth="1.600" /><path d="M0 0h6v6H0z" fill="#e6955f" /></Icon><Caret /></StatusButton>
          <StatusButton $gap aria-label="交点"><Icon w={17} h={20} box="0 0 18 20"><path d="M0 1l18 18M18 1L0 19" stroke="#444" strokeWidth="1.300" /><circle cx="9" cy="10" r="2" fill="#444" /></Icon></StatusButton>
          <StatusButton aria-label="角度"><Icon w={17} h={20} box="0 0 18 20"><path d="M14 3L1 18h17" stroke="#444" strokeWidth="1.400" /><circle cx="8" cy="10.500" r="2" fill="#444" /></Icon><Caret /></StatusButton>
          <StatusButton aria-label="动态输入"><Icon w={17} h={20} box="0 0 18 20"><path d="M0 5h8M4 1v8" stroke="#444" strokeWidth="1.400" /><path d="M7 13h11v6H7z" fill="#444" /></Icon><Caret /></StatusButton>
          <StatusButton>跨图层选择</StatusButton>
          <StatusButton>折线选择</StatusButton>
        </StatusButtons>
        <span>按鼠标左键指定第一个角点，或拾取构件图元</span>
        <Fps>250 FPS</Fps>
      </StatusBar>

      <Dialog aria-label="表格输入">
        <DialogTitle>
          <span>表格输入</span>
          <DialogButtons>
            <button aria-label="最小化"><Icon size={12} box="0 0 12 12"><path d="M1 9h10" stroke="#fff" strokeWidth="2" /></Icon></button>
            <button aria-label="最大化"><Icon size={12} box="0 0 12 12"><path d="M1.500 2h9v8.500h-9z" stroke="#fff" strokeWidth="1.600" /></Icon></button>
            <button aria-label="关闭"><CrossIcon color="#fff" /></button>
          </DialogButtons>
        </DialogTitle>
        <DialogBody>
          <DialogTools>
            <SelectWrap $w={60}><select aria-label="单项工程"><option>住宅</option></select><Caret /></SelectWrap>
            <SelectWrap $w={104}><select aria-label="楼层"><option>第-1层</option></select><Caret /></SelectWrap>
            <ToolGroup>
              <ToolButton $gap={5}><SaveDiskIcon />单构件存盘<CaretSlot><Caret /></CaretSlot></ToolButton>
              <ToolButton><CopyFloorIcon />复制构件到其它楼层<CaretSlot><Caret /></CaretSlot></ToolButton>
            </ToolGroup>
          </DialogTools>
          <Tabs>
            <Tab>钢筋</Tab>
            <Tab $active>土建</Tab>
          </Tabs>
          <Panes>
            <LeftPane>
              <Tools>
                <ToolButton><NodeIcon />节点</ToolButton>
                <ToolButton><PartIcon />构件</ToolButton>
                <ToolButton><DeleteIcon />删除</ToolButton>
                <ToolButton><BinocularsIcon />查找</ToolButton>
                <MoreButton aria-label="更多"><svg width="10" height="9" viewBox="0 0 10 9"><path d="M0 0l4.500 4.500L0 9zM5.500 0L10 4.500 5.500 9z" fill="#444" /></svg></MoreButton>
              </Tools>
              <Tree>
                <TreeRow $level={0}><TreeArrow /><FolderOpen />土建表格构件</TreeRow>
                <TreeRow $level={1}><TreeArrow /><FolderOpen />楼梯</TreeRow>
                <TreeRow $level={2}><TreeIndent /><LeafIcon />楼梯砼</TreeRow>
                <TreeRow $level={1}><TreeArrow /><FolderOpen />楼梯扶手</TreeRow>
                <TreeRow $level={2}>
                  <TreeIndent />
                  <Selected><LeafIcon /><NameInput aria-label="构件名称" defaultValue="lou'ti" /></Selected>
                </TreeRow>
              </Tree>
              <Strip />
              <PropBox>
                <PropTable>
                  <thead><tr><th aria-label="序号" /><th scope="col">属性名称</th><th scope="col">属性值</th></tr></thead>
                  <tbody>
                    {PROPS.map(([k, v], i) => <tr key={k}><td>{i + 1}</td><td>{k}</td><td>{v}</td></tr>)}
                  </tbody>
                </PropTable>
              </PropBox>
            </LeftPane>
            <Divider />
            <RightPane>
              <UpperBox>
                <UpperTools>
                  <ToolButton><AddListIcon />添加清单</ToolButton>
                  <ToolButton disabled><AddQuotaIcon />添加定额</ToolButton>
                  <ToolButton disabled><AddDetailIcon />添加明细</ToolButton>
                  <ToolButton disabled><DeleteIcon off />删除</ToolButton>
                  <ToolButton $gap={8}><QueryIcon />查询<CaretSlot><Caret /></CaretSlot></ToolButton>
                  <ToolButton $gap={12}><FeatureIcon />项目特征</ToolButton>
                  <ToolButton>
                    <Icon w={18} h={20} box="0 0 18 20"><path d="M11 2c-3-1.500-4 1-4.500 4L5 15c-.5 3-2 4-4 3M3 8h7M10 10c2-1 2.500 1 3 4s1 3.500 3 2.500M17 10c-3 0-5 8-8 7" stroke={BLUE} strokeWidth="1.500" /></Icon>
                    换算<CaretSlot><Caret /></CaretSlot>
                  </ToolButton>
                </UpperTools>
                <Columns cols={UPPER_COLS} />
              </UpperBox>
              <Strip />
              <LowerTabs>
                <LowerTab $active>查询外部清单<CrossIcon size={11} /></LowerTab>
                <LowerTab>查询清单库<CrossIcon size={11} /></LowerTab>
                <LowerTab>查询定额库<CrossIcon size={11} /></LowerTab>
              </LowerTabs>
              <LowerBox>
                <LowerTools>
                  <ToolButton $bold $gap={15}><ImportIcon label="EXL" />导入EXCEL</ToolButton>
                  <ToolButton $bold $gap={9}><ImportIcon label="GBQ" />导入GBQ</ToolButton>
                  <KeywordBox><input aria-label="搜索关键字" placeholder="搜索关键字..." /><MagnifierIcon color="#4a9fd0" size={14} /></KeywordBox>
                </LowerTools>
                <Columns cols={LOWER_COLS} bold />
              </LowerBox>
            </RightPane>
          </Panes>
        </DialogBody>
        <Grip>
          <svg width="11" height="11" viewBox="0 0 11 11" aria-hidden="true"><path d="M8 0h2v2H8zM4 4h2v2H4zM8 4h2v2H8zM0 8h2v2H0zM4 8h2v2H4zM8 8h2v2H8z" fill="#666" /></svg>
        </Grip>
      </Dialog>

      <Ime role="listbox" aria-label="候选词">
        {CANDIDATES.map((c, i) => <Candidate key={c} $active={i === 0}><small>{i + 1}</small>{c}</Candidate>)}
        <ImeStub />
      </Ime>
      <Pointer>
        <svg width="10" height="18" viewBox="0 0 10 18" fill="none"><path d="M1 .8h3l1 1 1-1h3M5 2v14M1 17.200h3l1-1 1 1h3" stroke="#222" strokeWidth="1.200" /></svg>
      </Pointer>

      <Watermark aria-hidden="true">
        <svg width="132" height="130" viewBox="0 0 132 130">
          <defs>
            <filter id="soft" x="-20%" y="-20%" width="140%" height="140%"><feDropShadow dx="1" dy="2" stdDeviation="1.300" floodOpacity=".5" /></filter>
          </defs>
          <g fill="#fff" fillOpacity=".86" filter="url(#soft)">
            <path d="M56 6C24 18 2 40 3 68c1 20 11 36 26 46C16 92 14 66 26 44 38 24 58 12 82 6z" />
            <path d="M100 20c20 10 30 26 29 44-1 20-7 26-12 34-2-4-3-8-6-10 1 8 1 14-1 19 2-22-8-37-27-37-14 0-20 10-19 20 5-10 17-14 25-6 12 12 8 38-19 41-24-1-40-21-39-47 1-28 29-54 69-58z" />
          </g>
        </svg>
        <WatermarkText>
          <MarkName>建筑课堂</MarkName>
          <MarkUrl>jzkt.fwxqx.com</MarkUrl>
        </WatermarkText>
      </Watermark>
    </Shell>
  );
}
